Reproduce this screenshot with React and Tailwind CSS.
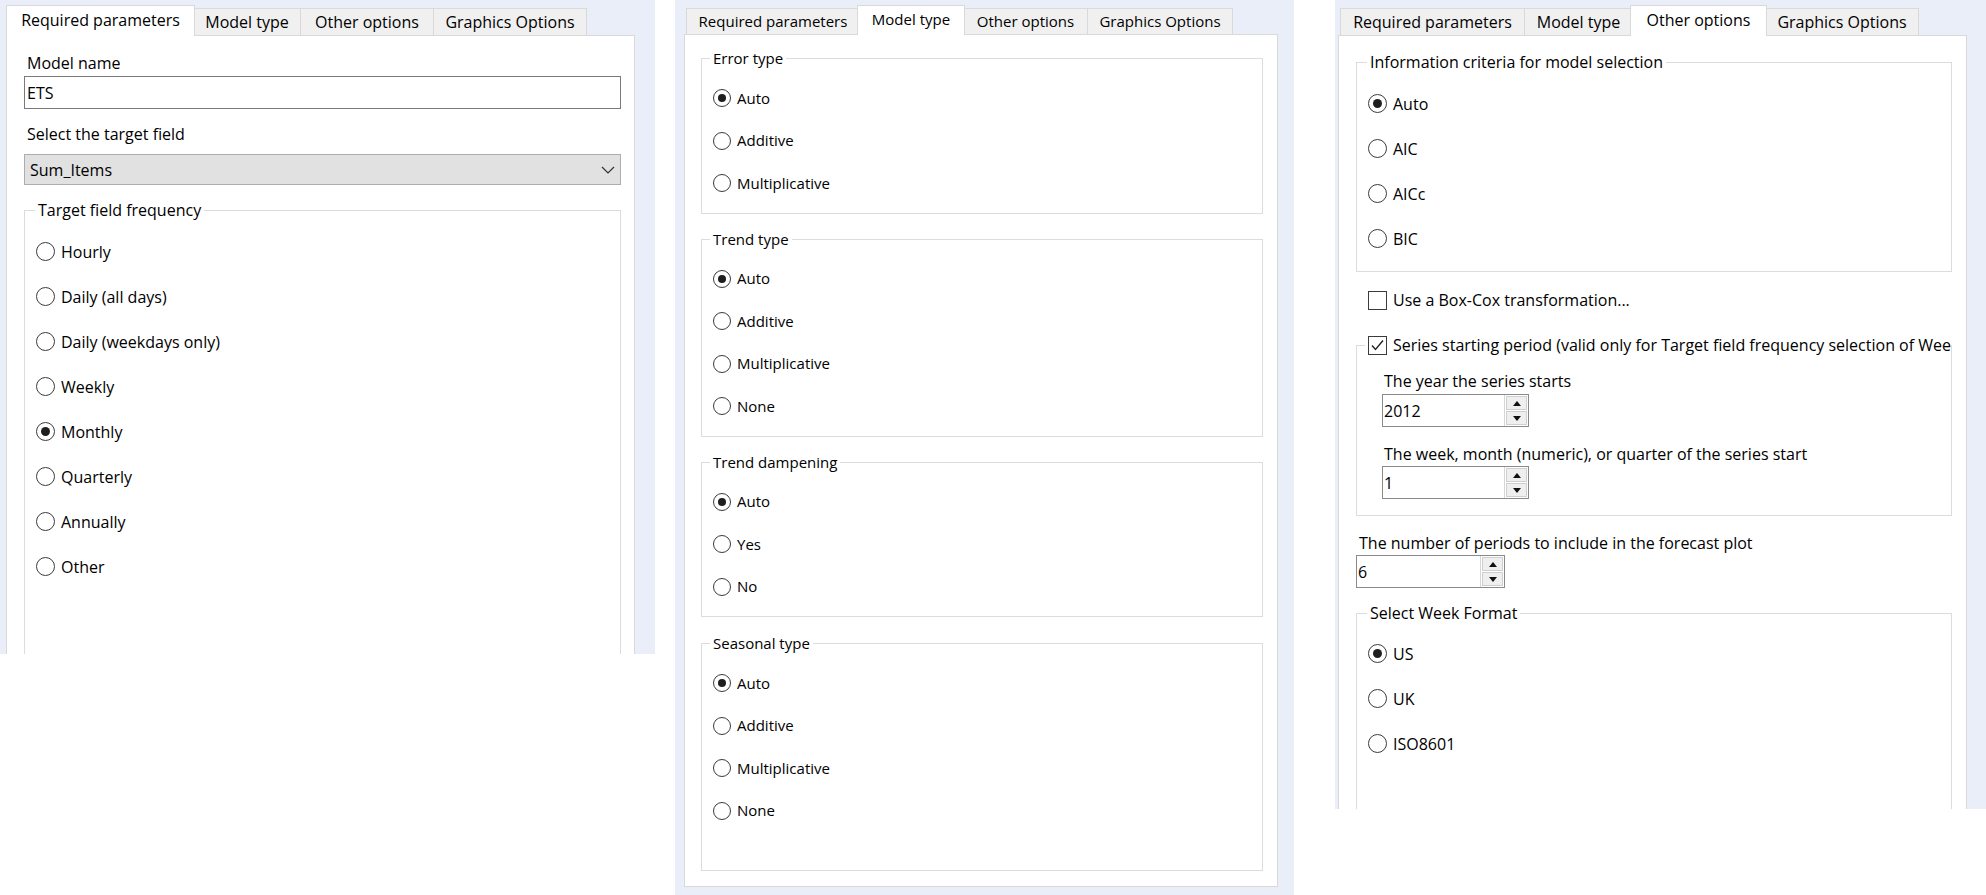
import React from 'react';

const TAB_NAMES = ['Required parameters', 'Model type', 'Other options', 'Graphics Options'];

// Windows-style tab strip; the active tab sits 3px higher and overlaps its neighbours
function TabStrip({ active, widths, sm }) {
  return (
    <div className={`flex items-end ml-[2px] relative z-10 ${sm ? 'h-[29px]' : 'h-[30px]'}`}>
      {TAB_NAMES.map((name, i) => {
        const on = i === active;
        const last = i === TAB_NAMES.length - 1;
        let cls = 'flex items-center justify-center whitespace-nowrap shrink-0 border-t border-l border-[#d9d9d9] ' + widths[i];
        if (on) {
          cls += ' bg-white border-r -mx-[2px] -mb-px relative z-10 pb-[3px] ' + (sm ? 'h-[30px]' : 'h-[31px]');
        } else {
          cls += ' bg-[#f0f0f0] ' + (sm ? 'h-[26px]' : 'h-[27px]');
          if (last) cls += ' border-r';
        }
        return (
          <div key={name} className={cls}>
            {name}
          </div>
        );
      })}
    </div>
  );
}

function Radio({ label, checked, sm }) {
  return (
    <div className={`flex items-center ${sm ? 'h-[42.5px]' : 'h-[45px]'}`}>
      <span
        className={`flex items-center justify-center rounded-full border-[1.5px] border-[#3b3b3b] bg-white shrink-0 ${
          sm ? 'w-[18px] h-[18px]' : 'w-[19px] h-[19px]'
        }`}
      >
        {checked && <span className={`rounded-full bg-[#1e1e1e] ${sm ? 'w-[8px] h-[8px]' : 'w-[9px] h-[9px]'}`} />}
      </span>
      <span className="ml-[6px] whitespace-nowrap">{label}</span>
    </div>
  );
}

function Checkbox({ checked }) {
  return (
    <span className="flex items-center justify-center w-[19px] h-[19px] border-[1.5px] border-[#3b3b3b] bg-white shrink-0">
      {checked && (
        <svg width="15" height="15" viewBox="0 0 15 15">
          <polyline points="2,7.5 5.5,11.5 13,2.5" fill="none" stroke="#222" strokeWidth="1.4" />
        </svg>
      )}
    </span>
  );
}

function Spinner({ value, width }) {
  return (
    <div className={`flex h-[33px] border border-[#8a8a8a] bg-white ${width}`}>
      <div className="flex-1 flex items-center pl-[1px]">{value}</div>
      <div className="w-[24px] flex flex-col gap-[1px] p-[1px] border-l border-[#d6d6d6] bg-white">
        <div className="flex-1 flex items-center justify-center bg-[#efefef] border border-[#cfcfcf]">
          <svg width="8" height="5" viewBox="0 0 8 5">
            <polygon points="0,5 4,0 8,5" fill="#111" />
          </svg>
        </div>
        <div className="flex-1 flex items-center justify-center bg-[#efefef] border border-[#cfcfcf]">
          <svg width="8" height="5" viewBox="0 0 8 5">
            <polygon points="0,0 8,0 4,5" fill="#111" />
          </svg>
        </div>
      </div>
    </div>
  );
}

// Tab 1: required parameters
function RequiredPanel() {
  const freqs = ['Hourly', 'Daily (all days)', 'Daily (weekdays only)', 'Weekly', 'Monthly', 'Quarterly', 'Annually', 'Other'];
  return (
    <div className="w-[655px] h-[654px] shrink-0 bg-[#e9eef8] pl-[6px] pr-[20px] pt-[5px] overflow-hidden text-[16px] leading-[20px]">
      <TabStrip active={0} widths={['w-[189px]', 'w-[107px]', 'w-[133px]', 'w-[154px]']} />
      <div className="h-[700px] border border-[#d9d9d9] bg-white pl-[17px] pr-[13px] pt-[17px] flex flex-col">
        <div className="ml-[3px]">Model name</div>
        <div className="mt-[3px] h-[33px] border border-[#7a7a7a] flex items-center pl-[2px]">ETS</div>
        <div className="ml-[3px] mt-[15px]">Select the target field</div>
        <div className="mt-[10px] h-[31px] bg-[#e1e1e1] border border-[#adadad] flex items-center justify-between pl-[5px] pr-[5px]">
          <span>Sum_Items</span>
          <svg width="14" height="8" viewBox="0 0 14 8">
            <polyline points="1,1 7,7 13,1" fill="none" stroke="#333" strokeWidth="1.2" />
          </svg>
        </div>
        <fieldset className="mt-[15px] min-w-0 border border-[#dcdcdc] h-[520px] pl-[11px] pt-[9px]">
          <legend className="-ml-px px-[3px] leading-[20px]">Target field frequency</legend>
          {freqs.map((f) => (
            <Radio key={f} label={f} checked={f === 'Monthly'} />
          ))}
        </fieldset>
      </div>
    </div>
  );
}

function SmallGroup({ title, options, className }) {
  return (
    <fieldset className={`min-w-0 border border-[#dcdcdc] pl-[11px] pt-[9px] ${className}`}>
      <legend className="-ml-[3px] px-[3px] leading-[19px]">{title}</legend>
      {options.map((o, i) => (
        <Radio key={o} label={o} checked={i === 0} sm />
      ))}
    </fieldset>
  );
}

// Tab 2: model type
function ModelTypePanel() {
  return (
    <div className="w-[619px] h-[895px] shrink-0 ml-[20px] bg-[#e9eef8] pl-[9px] pr-[16px] pt-[5px] pb-[8px] flex flex-col text-[15px] leading-[19px]">
      <TabStrip active={1} widths={['w-[173px]', 'w-[108px]', 'w-[124px]', 'w-[146px]']} sm />
      <div className="flex-1 border border-[#d9d9d9] bg-white pl-[16px] pr-[14px] pt-[14px] flex flex-col">
        <SmallGroup title="Error type" options={['Auto', 'Additive', 'Multiplicative']} className="pb-[8px]" />
        <SmallGroup title="Trend type" options={['Auto', 'Additive', 'Multiplicative', 'None']} className="mt-[16px] pb-[8px]" />
        <SmallGroup title="Trend dampening" options={['Auto', 'Yes', 'No']} className="mt-[16px] pb-[8px]" />
        <SmallGroup title="Seasonal type" options={['Auto', 'Additive', 'Multiplicative', 'None']} className="mt-[17px] pb-[38px]" />
      </div>
    </div>
  );
}

// Tab 3: other options
function OtherOptionsPanel() {
  return (
    <div className="w-[651px] h-[809px] shrink-0 ml-[41px] bg-[#e9eef8] pl-[3px] pr-[19px] pt-[5px] overflow-hidden text-[16px] leading-[20px]">
      <TabStrip active={2} widths={['w-[184px]', 'w-[108px]', 'w-[137px]', 'w-[154px]']} />
      <div className="h-[820px] border border-[#d9d9d9] bg-white pl-[17px] pr-[14px] pt-[16px] flex flex-col">
        <fieldset className="min-w-0 border border-[#dcdcdc] pl-[11px] pt-[9px] pb-[10px]">
          <legend className="-ml-px px-[3px] leading-[20px]">Information criteria for model selection</legend>
          {['Auto', 'AIC', 'AICc', 'BIC'].map((o, i) => (
            <Radio key={o} label={o} checked={i === 0} />
          ))}
        </fieldset>

        <div className="mt-[18px] ml-[12px] h-[24px] flex items-center">
          <Checkbox />
          <span className="ml-[6px]">Use a Box-Cox transformation...</span>
        </div>

        {/* group headed by a checkbox; its caption runs past the frame and is clipped */}
        <fieldset className="mt-[23px] min-w-0 border border-[#dcdcdc] pl-[25px] pt-[14px] pb-[16px]">
          <legend className="-ml-[17px] pl-[3px] w-[586px] h-[24px] overflow-hidden whitespace-nowrap bg-white">
            <div className="flex items-center h-full">
              <Checkbox checked />
              <span className="ml-[6px]">
                Series starting period (valid only for Target field frequency selection of Weekly, Monthly or Quarterly)
              </span>
            </div>
          </legend>
          <div className="ml-[2px]">The year the series starts</div>
          <div className="mt-[3px]">
            <Spinner value="2012" width="w-[147px]" />
          </div>
          <div className="ml-[2px] mt-[17px]">The week, month (numeric), or quarter of the series start</div>
          <div className="mt-[2px]">
            <Spinner value="1" width="w-[147px]" />
          </div>
        </fieldset>

        <div className="ml-[3px] mt-[17px]">The number of periods to include in the forecast plot</div>
        <div className="mt-[2px]">
          <Spinner value="6" width="w-[149px]" />
        </div>

        <fieldset className="mt-[15px] min-w-0 border border-[#dcdcdc] h-[300px] pl-[11px] pt-[8px]">
          <legend className="-ml-px px-[3px] leading-[20px]">Select Week Format</legend>
          {['US', 'UK', 'ISO8601'].map((o, i) => (
            <Radio key={o} label={o} checked={i === 0} />
          ))}
        </fieldset>
      </div>
    </div>
  );
}

export default function App() {
  return (
    <div className="w-[1986px] h-[895px] overflow-hidden bg-white flex items-start text-black font-['Open_Sans','Noto_Sans',sans-serif]">
      <RequiredPanel />
      <ModelTypePanel />
      <OtherOptionsPanel />
    </div>
  );
}
